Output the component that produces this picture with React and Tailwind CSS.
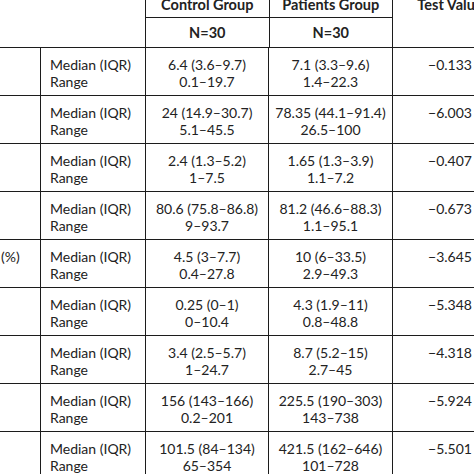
import React from 'react';

const rows = [
  { label: '', c: ['6.4 (3.6–9.7)', '0.1–19.7'], p: ['7.1 (3.3–9.6)', '1.4–22.3'], t: '−0.133' },
  { label: '', c: ['24 (14.9–30.7)', '5.1–45.5'], p: ['78.35 (44.1–91.4)', '26.5–100'], t: '−6.003' },
  { label: '', c: ['2.4 (1.3–5.2)', '1–7.5'], p: ['1.65 (1.3–3.9)', '1.1–7.2'], t: '−0.407' },
  { label: '', c: ['80.6 (75.8–86.8)', '9–93.7'], p: ['81.2 (46.6–88.3)', '1.1–95.1'], t: '−0.673' },
  { label: '(%)', c: ['4.5 (3–7.7)', '0.4–27.8'], p: ['10 (6–33.5)', '2.9–49.3'], t: '−3.645' },
  { label: '', c: ['0.25 (0–1)', '0–10.4'], p: ['4.3 (1.9–11)', '0.8–48.8'], t: '−5.348' },
  { label: '', c: ['3.4 (2.5–5.7)', '1–24.7'], p: ['8.7 (5.2–15)', '2.7–45'], t: '−4.318' },
  { label: '', c: ['156 (143–166)', '0.2–201'], p: ['225.5 (190–303)', '143–738'], t: '−5.924' },
  { label: '', c: ['101.5 (84–134)', '65–354'], p: ['421.5 (162–646)', '101–728'], t: '−5.501' },
];

const cols = 'grid grid-cols-[41px_105px_123px_124px_114px]';

const App = () => {
  return (
    <div className="w-[474px] h-[474px] overflow-hidden bg-white text-[#222] text-[14px] font-['Lato','Open_Sans',sans-serif]">
      <div className="w-[507px] -mt-[8px]">
        {/* Cabecera */}
        <div className="grid grid-cols-[146px_123px_124px_114px] border-b border-[#1c1c1c]">
          <div className="border-r border-[#1c1c1c]" />
          <div className="col-span-2 grid grid-cols-2">
            <div className="h-[26px] flex items-center justify-center font-bold text-[14.5px] border-r border-b border-[#1c1c1c]">
              Control Group
            </div>
            <div className="h-[26px] flex items-center justify-center font-bold text-[14.5px] border-r border-b border-[#1c1c1c]">
              Patients Group
            </div>
            <div className="h-[29px] flex items-center justify-center font-bold text-[14.5px] border-r border-[#1c1c1c]">
              N=30
            </div>
            <div className="h-[29px] flex items-center justify-center font-bold text-[14.5px] border-r border-[#1c1c1c]">
              N=30
            </div>
          </div>
          <div className="pt-[4px] text-center font-bold text-[14.5px] leading-[17px]">Test Value</div>
        </div>
        {/* Filas */}
        {rows.map((r, i) => (
          <div key={i} className={`${cols} h-[48px] border-b border-[#1c1c1c] leading-[17px]`}>
            <div className="pt-[8px] pl-[1px] border-r border-[#1c1c1c]">{r.label}</div>
            <div className="pt-[8px] pl-[9px] border-r border-[#1c1c1c]">
              <div>Median (IQR)</div>
              <div>Range</div>
            </div>
            <div className="pt-[8px] text-center border-r border-[#1c1c1c]">
              <div>{r.c[0]}</div>
              <div>{r.c[1]}</div>
            </div>
            <div className="pt-[8px] text-center border-r border-[#1c1c1c]">
              <div>{r.p[0]}</div>
              <div>{r.p[1]}</div>
            </div>
            <div className="pt-[8px] text-center">{r.t}</div>
          </div>
        ))}
      </div>
    </div>
  );
};

export default App;
